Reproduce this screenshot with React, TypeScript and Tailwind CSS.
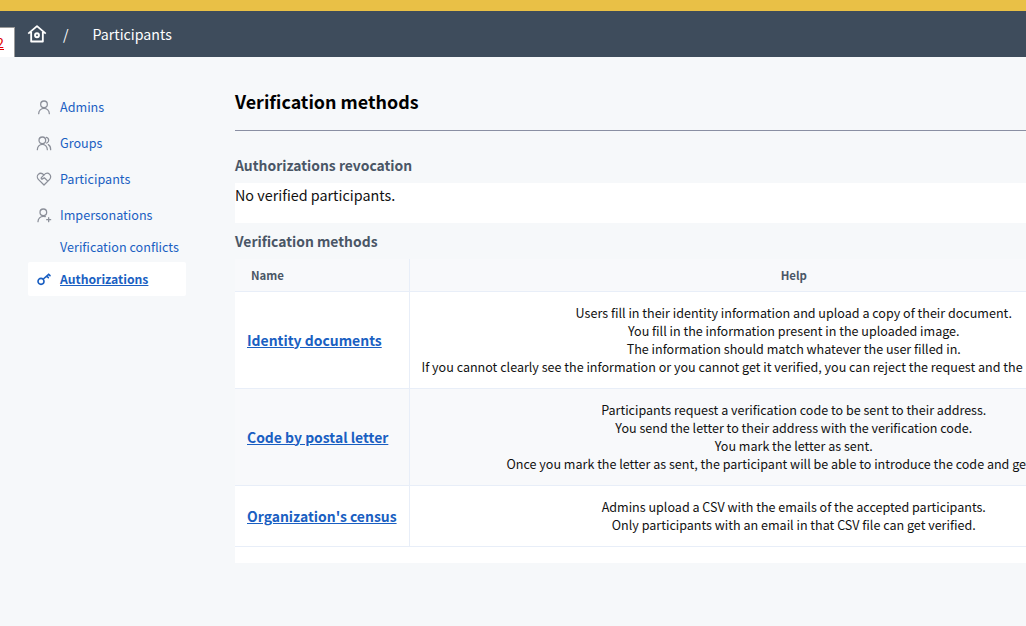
import React from "react";

const F = "[font-family:'Noto_Sans_CJK_SC','Source_Sans_Pro',sans-serif]";

function I({ children }: { children: React.ReactNode }) {
  return (
    <svg viewBox="0 0 24 24" width="16" height="16" fill="none" stroke="currentColor" strokeWidth="1.9" strokeLinecap="round" strokeLinejoin="round" className="shrink-0">
      {children}
    </svg>
  );
}

const User = () => (
  <I>
    <circle cx="12" cy="8" r="5" />
    <path d="M4 22c0-4.500 3.500-8 8-8s8 3.500 8 8" />
  </I>
);
const Group = () => (
  <I>
    <circle cx="9.500" cy="8" r="5" />
    <path d="M2 22c0-4.500 3.300-8 7.500-8s7.500 3.500 7.500 8M15.500 3.500c2.200.4 3.500 2.200 3.500 4.500 0 2-1.200 3.600-3 4.200M18.500 14.500c2.200 1.200 3.500 4 3.500 7.500" />
  </I>
);
const Heart = () => (
  <I>
    <path d="M12 21 3.500 12.500C1.500 10.500 1.500 7 3.500 5c2.200-2.200 5.700-2 8.500.8 2.800-2.800 6.300-3 8.500-.8 2 2 2 5.500 0 7.500L12 21Z" />
    <path d="M12 5.800 8 10c-.8 1 .5 2.500 1.800 1.800l2.700-1.600 4.500 4.300" />
  </I>
);
const UserAdd = () => (
  <I>
    <circle cx="11" cy="8" r="5" />
    <path d="M3 22c0-4.500 3.500-8 8-8 1 0 2 .2 3 .5M19 16v6M16 19h6" />
  </I>
);
const Key = () => (
  <svg viewBox="0 0 24 24" width="16" height="16" fill="none" stroke="currentColor" strokeWidth="2.400" strokeLinecap="round" strokeLinejoin="round" className="shrink-0">
    <circle cx="7.500" cy="15.500" r="4.500" />
    <path d="m11 12 8-7M16 7.500l2.500 2.500M19 5l2 2" />
  </svg>
);
const Home = () => (
  <svg viewBox="0 0 24 24" width="20" height="20" fill="none" stroke="currentColor" strokeWidth="2.200" strokeLinejoin="round">
    <path d="M1.500 11.500 12 2.500l10.500 9M5 9.500V21h14V9.500" />
    <circle cx="12" cy="13.500" r="2.300" strokeWidth="2.400" />
  </svg>
);

function NavItem({ icon, label, active }: { icon?: React.ReactNode; label: string; active?: boolean }) {
  return (
    <a className={`flex h-[34px] w-[158px] items-center rounded-[2px] pl-2 leading-[18px] text-[#1a5fc2] ${active ? "bg-white text-[12.2px] font-semibold" : "text-[12.6px]"}`}>
      <span className="w-6 shrink-0 text-[#8b8f99]">
        <span className={`block ${active ? "text-[#1a5fc2]" : ""}`}>{icon}</span>
      </span>
      <span className={active ? "underline" : ""}>{label}</span>
    </a>
  );
}

const methods = [
  {
    name: "Identity documents",
    lines: [
      "Users fill in their identity information and upload a copy of their document.",
      "You fill in the information present in the uploaded image.",
      "The information should match whatever the user filled in.",
      "If you cannot clearly see the information or you cannot get it verified, you can reject the request and the user will be able to fix it.",
    ],
    bg: "bg-white",
    h: "h-[97px]",
  },
  {
    name: "Code by postal letter",
    lines: [
      "Participants request a verification code to be sent to their address.",
      "You send the letter to their address with the verification code.",
      "You mark the letter as sent.",
      "Once you mark the letter as sent, the participant will be able to introduce the code and get verified.",
    ],
    bg: "bg-[#f8f9fb]",
    h: "h-[97px]",
  },
  {
    name: "Organization's census",
    lines: [
      "Admins upload a CSV with the emails of the accepted participants.",
      "Only participants with an email in that CSV file can get verified.",
    ],
    bg: "bg-white",
    h: "h-[61px]",
  },
];

export default function App() {
  return (
    <div className={`h-[626px] w-[1026px] overflow-hidden bg-[#f6f8fa] ${F}`}>
      <div className="h-[11px] bg-[#e9c046]" />
      <header className="flex h-[46px] items-center bg-[#3e4c5c] text-white">
        <div className="mt-[16px] flex h-[30px] w-[15px] shrink-0 items-center justify-end overflow-hidden border-r border-t border-[#9a9a9a] bg-white">
          <span className="pr-[10px] text-[14px] text-[#e00000] underline">2</span>
        </div>
        <span className="mb-[1px] ml-[12px] block"><Home /></span>
        <span className="ml-[16px] text-[14.2px] leading-5">/</span>
        <span className="ml-[24px] text-[14.2px] leading-5">Participants</span>
      </header>
      <div className="flex">
        <nav className="flex w-[235px] shrink-0 flex-col gap-[2px] pl-[28px] pt-[33px]">
          <NavItem icon={<User />} label="Admins" />
          <NavItem icon={<Group />} label="Groups" />
          <NavItem icon={<Heart />} label="Participants" />
          <NavItem icon={<UserAdd />} label="Impersonations" />
          <a className="flex h-[26px] items-center pl-8 text-[12.6px] leading-[18px] text-[#1a5fc2]">Verification conflicts</a>
          <NavItem icon={<Key />} label="Authorizations" active />
        </nav>
        <main className="w-[943px] shrink-0">
          <h1 className="flex h-[74px] items-end border-b border-[#8a8fa3] pb-[16px] text-[17.9px] font-bold leading-[26px] text-black">Verification methods</h1>
          <h2 className="mt-[24px] text-[13.9px] font-semibold leading-5 text-[#4a5666]">Authorizations revocation</h2>
          <div className="mt-[8px] h-10 bg-white text-[14.35px] leading-6 text-[#111]">No verified participants.</div>
          <h2 className="mt-[8px] text-[13.9px] font-semibold leading-5 text-[#4a5666]">Verification methods</h2>
          <div className="mt-2 bg-white pb-4">
            <table className="w-full table-fixed border-collapse">
              <colgroup>
                <col className="w-[174px]" />
                <col />
              </colgroup>
              <thead>
                <tr className="h-[32px] border-b border-[#e8eef8] bg-[#f8f9fb]">
                  <th className="border-r border-[#e8eef8] pl-4 pt-[2px] text-left text-[11.4px] font-semibold text-[#4a5666]">Name</th>
                  <th className="pt-[2px] text-center text-[11.4px] font-semibold text-[#4a5666]">Help</th>
                </tr>
              </thead>
              <tbody>
                {methods.map((m) => (
                  <tr key={m.name} className={`${m.h} border-b border-[#e8eef8] ${m.bg}`}>
                    <td className="border-r border-[#e8eef8] pl-3 text-[13.95px] font-semibold leading-5 text-[#1a5fc2]">
                      <a className="underline">{m.name}</a>
                    </td>
                    <td className="whitespace-nowrap text-center text-[12.56px] leading-[18px] text-[#111]">
                      {m.lines.map((l) => (
                        <div key={l}>{l}</div>
                      ))}
                    </td>
                  </tr>
                ))}
              </tbody>
            </table>
          </div>
        </main>
      </div>
    </div>
  );
}
